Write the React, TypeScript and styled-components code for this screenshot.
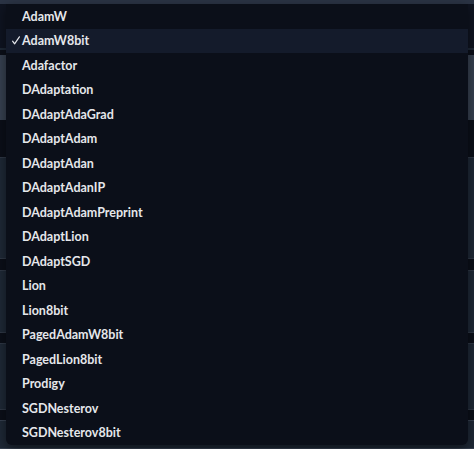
import React from "react";
import styled, { createGlobalStyle } from "styled-components";

const options = [
  "AdamW",
  "AdamW8bit",
  "Adafactor",
  "DAdaptation",
  "DAdaptAdaGrad",
  "DAdaptAdam",
  "DAdaptAdan",
  "DAdaptAdanIP",
  "DAdaptAdamPreprint",
  "DAdaptLion",
  "DAdaptSGD",
  "Lion",
  "Lion8bit",
  "PagedAdamW8bit",
  "PagedLion8bit",
  "Prodigy",
  "SGDNesterov",
  "SGDNesterov8bit",
];

const selected = "AdamW8bit";

const GlobalStyle = createGlobalStyle`
  html, body {
    margin: 0;
    padding: 0;
    background: #0b0f19;
  }
  body {
    font-family: "Lato", "Open Sans", sans-serif;
  }
`;

const Page = styled.div`
  position: relative;
  width: 474px;
  height: 449px;
  overflow: hidden;
  background: #0b0f19;
`;

const Form = styled.div`
  display: flex;
  flex-direction: column;
`;

const Block = styled.div<{ $h: number; $bg: string; $mt?: number; $border?: string }>`
  height: ${({ $h }) => $h}px;
  margin-top: ${({ $mt }) => $mt ?? 0}px;
  background: ${({ $bg }) => $bg};
  border-top: ${({ $border }) => ($border ? `1px solid ${$border}` : "none")};
  border-bottom: ${({ $border }) => ($border ? `1px solid ${$border}` : "none")};
  box-sizing: border-box;
`;

const Menu = styled.ul`
  position: absolute;
  top: 4px;
  left: 6px;
  width: 462px;
  height: 441px;
  margin: 0;
  padding: 0;
  list-style: none;
  background: #0b0f19;
  border-radius: 0 0 6px 6px;
  box-shadow: 0 4px 12px rgba(0, 0, 0, 0.5);
  overflow: hidden;
`;

const Item = styled.li<{ $active?: boolean }>`
  display: flex;
  align-items: center;
  height: 24.5px;
  padding-left: 6px;
  background: ${({ $active }) => ($active ? "#141b2b" : "transparent")};
  color: #e5e7eb;
  font-size: 12.5px;
  font-weight: 700;
  white-space: nowrap;
`;

const Check = styled.span`
  display: flex;
  align-items: center;
  width: 10px;
  height: 100%;
`;

const CheckIcon = () => (
  <svg width="8" height="9" viewBox="0 0 8 9" fill="none">
    <path d="M0.6 5.2 L2.6 7.8 L7.4 0.8" stroke="#e5e7eb" strokeWidth="1.2" strokeLinecap="round" strokeLinejoin="round" />
  </svg>
);

export default function App() {
  return (
    <>
      <GlobalStyle />
      <Page>
        <Form>
          <Block $h={4} $bg="#2b3445" />
          <Block $h={44} $bg="#0f1421" />
          <Block $h={2} $bg="#1f2937" />
          <Block $h={65} $mt={5} $bg="#374151" />
          <Block $h={102} $mt={37} $bg="#1f2937" $border="#2f3846" />
          <Block $h={63} $mt={11} $bg="#1f2937" $border="#2f3846" />
          <Block $h={67} $mt={10} $bg="#1f2937" $border="#2f3846" />
          <Block $h={29} $mt={10} $bg="#1f2937" $border="#374151" />
        </Form>
        <Menu role="listbox">
          {options.map((o) => (
            <Item key={o} $active={o === selected} role="option" aria-selected={o === selected}>
              <Check>{o === selected ? <CheckIcon /> : null}</Check>
              {o}
            </Item>
          ))}
        </Menu>
      </Page>
    </>
  );
}
